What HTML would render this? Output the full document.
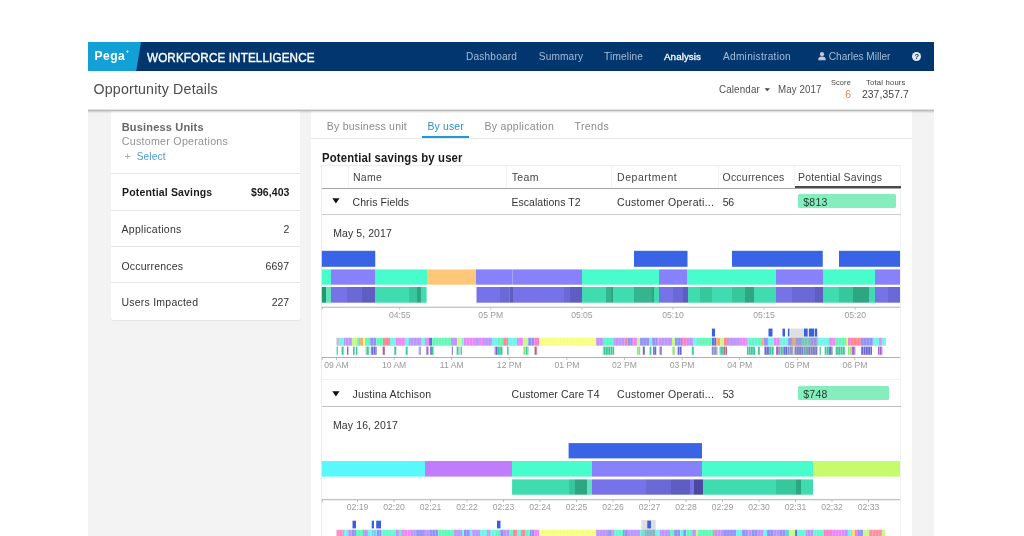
<!DOCTYPE html>
<html lang="en"><head><meta charset="utf-8"><title>Workforce Intelligence - Opportunity Details</title>
<style>
html,body{margin:0;padding:0;background:#fff;}
body{width:1024px;height:536px;position:relative;overflow:hidden;font-family:"Liberation Sans",sans-serif;}
.s{position:absolute;left:0;top:0;width:1024px;height:536px;display:block;margin:0;padding:0;will-change:transform;}
.s>*{position:absolute;display:block;}
.s>span,.s>i{white-space:nowrap;}
</style></head><body>
<div class="s app">
<div style="left:88.00px;top:42.00px;width:846.00px;height:494.00px;background:#f3f3f3;"></div>
</div>
<header class="s topbar">
<div style="left:88.00px;top:41.80px;width:846.00px;height:29.20px;background:#01366f;"></div>
<svg style="left:88px;top:41.8px" width="60" height="29.2"><polygon points="0,0 53,0 48.2,29.2 0,29.2" fill="#12a0d6"/></svg>
<i style="left:125.8px;top:47.6px;font-size:5.5px;line-height:7px;color:#fff;font-weight:bold;font-style:normal">+</i>
<svg style="left:817.5px;top:52.2px" width="8" height="8.4" viewBox="0 0 8 8.4"><circle cx="4" cy="2.2" r="2.1" fill="#c2cad8"/><path d="M0.2 8.2 C0.2 5.4 1.6 4.4 4 4.4 C6.4 4.4 7.8 5.4 7.8 8.2 Z" fill="#c2cad8"/></svg>
<div style="left:912px;top:52px;width:9px;height:9px;border-radius:50%;background:#e6eaf0"></div>
<i style="left:914.4px;top:52.6px;font-size:7.5px;line-height:8px;color:#01366f;font-weight:bold;font-style:normal">?</i>
<span style="left:94.60px;top:50.21px;font-size:12px;line-height:13.40px;color:#fff;letter-spacing:0.439px;font-weight:bold;">Pega</span>
<span style="left:146.50px;top:50.91px;font-size:13px;line-height:14.52px;color:#fff;letter-spacing:0.126px;transform:scaleX(0.9);transform-origin:0 0;-webkit-text-stroke:0.4px #fff;">WORKFORCE INTELLIGENCE</span>
<span style="left:466.00px;top:51.41px;font-size:10.1px;line-height:11.28px;color:#a9bcd6;letter-spacing:0.199px;">Dashboard</span>
<span style="left:538.75px;top:51.41px;font-size:10.1px;line-height:11.28px;color:#a9bcd6;letter-spacing:0.173px;">Summary</span>
<span style="left:604.00px;top:51.41px;font-size:10.1px;line-height:11.28px;color:#a9bcd6;letter-spacing:0.173px;">Timeline</span>
<span style="left:664.00px;top:52.41px;font-size:9.8px;line-height:10.95px;color:#fff;letter-spacing:0.073px;-webkit-text-stroke:0.3px #fff;">Analysis</span>
<span style="left:723.00px;top:51.41px;font-size:10.1px;line-height:11.28px;color:#a9bcd6;letter-spacing:0.289px;">Administration</span>
<span style="left:828.75px;top:51.41px;font-size:10.1px;line-height:11.28px;color:#a9bcd6;letter-spacing:0.001px;">Charles Miller</span>
</header>
<section class="s subheader">
<div style="left:88.00px;top:71.00px;width:846.00px;height:38.00px;background:#fff;"></div>
<div style="left:136.50px;top:70.00px;width:797.50px;height:1.00px;background:#002d62;"></div>
<svg style="left:763.7px;top:88.1px" width="7" height="4"><polygon points="0.5,0.3 6,0.3 3.25,3.3" fill="#444"/></svg>
<span style="left:93.50px;top:81.81px;font-size:14.2px;line-height:15.86px;color:#4c4c4c;letter-spacing:0.194px;">Opportunity Details</span>
<span style="left:718.75px;top:83.20px;font-size:10.8px;line-height:12.06px;color:#505050;letter-spacing:0.136px;transform:scaleX(0.91);transform-origin:0 0;">Calendar</span>
<span style="left:778.00px;top:83.20px;font-size:10.8px;line-height:12.06px;color:#505050;letter-spacing:0.129px;transform:scaleX(0.9);transform-origin:0 0;">May 2017</span>
<span style="left:831.00px;top:78.61px;font-size:7.4px;line-height:8.27px;color:#444;letter-spacing:0.117px;">Score</span>
<span style="left:866.00px;top:78.61px;font-size:7.7px;line-height:8.60px;color:#444;letter-spacing:0.183px;">Total hours</span>
<span style="left:845.30px;top:89.01px;font-size:10.4px;line-height:11.62px;color:#e8865a;">6</span>
<span style="left:861.90px;top:89.01px;font-size:10.4px;line-height:11.62px;color:#444;letter-spacing:0.079px;">237,357.7</span>
</section>
<aside class="s sidebar">
<div style="left:110.60px;top:110.50px;width:189.40px;height:209.50px;background:#fff;box-shadow:0 1px 1px rgba(0,0,0,0.06);border-radius:0 0 2px 2px;"></div>
<div style="left:110.60px;top:173.25px;width:189.40px;height:1.00px;background:#e6e6e6;"></div>
<div style="left:110.60px;top:209.50px;width:189.40px;height:1.00px;background:#e6e6e6;"></div>
<div style="left:110.60px;top:245.80px;width:189.40px;height:1.00px;background:#e6e6e6;"></div>
<div style="left:110.60px;top:282.10px;width:189.40px;height:1.00px;background:#e6e6e6;"></div>
<span style="left:121.75px;top:120.50px;font-size:11px;line-height:12.29px;color:#666;letter-spacing:0.176px;font-weight:bold;">Business Units</span>
<span style="left:121.75px;top:136.00px;font-size:10.7px;line-height:11.95px;color:#939393;letter-spacing:0.253px;">Customer Operations</span>
<span style="left:124.50px;top:150.01px;font-size:11px;line-height:12.29px;color:#aaa;">+</span>
<span style="left:136.75px;top:151.00px;font-size:10.2px;line-height:11.39px;color:#5299d0;letter-spacing:0.080px;">Select</span>
<span style="left:121.50px;top:186.31px;font-size:11.2px;line-height:12.51px;color:#1a1a1a;letter-spacing:0.166px;font-weight:bold;transform:scaleX(0.94);transform-origin:0 0;">Potential Savings</span>
<span style="left:250.50px;top:186.31px;font-size:11.2px;line-height:12.51px;color:#1a1a1a;letter-spacing:0.079px;font-weight:bold;transform:scaleX(0.94);transform-origin:0 0;">$96,403</span>
<span style="left:121.50px;top:224.00px;font-size:10.5px;line-height:11.73px;color:#333;letter-spacing:0.285px;">Applications</span>
<span style="left:283.50px;top:224.00px;font-size:10.5px;line-height:11.73px;color:#333;">2</span>
<span style="left:121.50px;top:260.50px;font-size:10.5px;line-height:11.73px;color:#333;letter-spacing:0.198px;">Occurrences</span>
<span style="left:265.50px;top:260.50px;font-size:10.5px;line-height:11.73px;color:#333;letter-spacing:0.047px;">6697</span>
<span style="left:121.50px;top:297.00px;font-size:10.5px;line-height:11.73px;color:#333;letter-spacing:0.229px;">Users Impacted</span>
<span style="left:271.75px;top:297.00px;font-size:10.5px;line-height:11.73px;color:#333;letter-spacing:-0.134px;">227</span>
</aside>
<main class="s content">
<div style="left:311.00px;top:110.50px;width:601.00px;height:425.50px;background:#fff;"></div>
<div style="left:311.00px;top:138.30px;width:601.00px;height:1.00px;background:#e7e7e7;"></div>
<div style="left:422.00px;top:135.50px;width:46.75px;height:2.80px;background:#1f9ad6;"></div>
<div style="left:321.50px;top:165.00px;width:579.00px;height:1.00px;background:#ececec;"></div>
<div style="left:321.30px;top:165.00px;width:1.00px;height:371.00px;background:#ebebeb;"></div>
<div style="left:899.70px;top:165.00px;width:1.00px;height:371.00px;background:#efefef;"></div>
<div style="left:347.70px;top:166.00px;width:1.00px;height:22.00px;background:#f3f3f3;"></div>
<div style="left:505.70px;top:166.00px;width:1.00px;height:22.00px;background:#f3f3f3;"></div>
<div style="left:611.20px;top:166.00px;width:1.00px;height:22.00px;background:#f3f3f3;"></div>
<div style="left:717.70px;top:166.00px;width:1.00px;height:22.00px;background:#f3f3f3;"></div>
<div style="left:793.70px;top:166.00px;width:1.00px;height:22.00px;background:#f3f3f3;"></div>
<div style="left:321.50px;top:188.20px;width:579.00px;height:1.10px;background:#a6a6a6;"></div>
<div style="left:794.50px;top:186.40px;width:106.00px;height:2.00px;background:#4a4a4a;"></div>
<div style="left:321.50px;top:213.50px;width:579.00px;height:1.00px;background:#cdcdcd;"></div>
<div style="left:321.50px;top:378.80px;width:579.00px;height:1.00px;background:#f2f2f2;"></div>
<div style="left:321.50px;top:405.60px;width:579.00px;height:1.20px;background:#bcbec4;"></div>
<svg style="left:331.5px;top:198.1px" width="8" height="6"><polygon points="0.3,0.3 7.5,0.3 3.9,5.4" fill="#111"/></svg>
<div style="left:798.00px;top:194.30px;width:98.30px;height:13.70px;background:#86edbd;border-radius:1.5px;"></div>
<svg style="left:331.5px;top:390.5px" width="8" height="6"><polygon points="0.3,0.3 7.5,0.3 3.9,5.4" fill="#111"/></svg>
<div style="left:798.00px;top:386.00px;width:90.50px;height:14.40px;background:#86edbd;border-radius:1.5px;"></div>
<svg style="left:311px;top:240px" width="601" height="296" viewBox="0 0 601 296"><rect x="10.80" y="10.80" width="53.45" height="16.00" fill="#3a64e6"/><rect x="323.00" y="10.80" width="53.50" height="16.00" fill="#3a64e6"/><rect x="421.00" y="10.80" width="90.75" height="16.00" fill="#3a64e6"/><rect x="528.00" y="10.80" width="61.00" height="16.00" fill="#3a64e6"/><linearGradient id="g1" gradientUnits="userSpaceOnUse" x1="10.80" y1="0" x2="589.00" y2="0"><stop offset="0.00000" stop-color="#49fccb"/><stop offset="0.01522" stop-color="#49fccb"/><stop offset="0.01522" stop-color="#8781fb"/><stop offset="0.09244" stop-color="#8781fb"/><stop offset="0.09244" stop-color="#49fccb"/><stop offset="0.18125" stop-color="#49fccb"/><stop offset="0.18125" stop-color="#ffc878"/><stop offset="0.26755" stop-color="#ffc878"/><stop offset="0.26755" stop-color="#8781fb"/><stop offset="0.44984" stop-color="#8781fb"/><stop offset="0.44984" stop-color="#49fccb"/><stop offset="0.58362" stop-color="#49fccb"/><stop offset="0.58362" stop-color="#8781fb"/><stop offset="0.63248" stop-color="#8781fb"/><stop offset="0.63248" stop-color="#49fccb"/><stop offset="0.78511" stop-color="#49fccb"/><stop offset="0.78511" stop-color="#8781fb"/><stop offset="0.86640" stop-color="#8781fb"/><stop offset="0.86640" stop-color="#49fccb"/><stop offset="0.95590" stop-color="#49fccb"/><stop offset="0.95590" stop-color="#8781fb"/><stop offset="1.00000" stop-color="#8781fb"/></linearGradient><rect x="10.80" y="29.40" width="578.20" height="15.30" fill="url(#g1)"/><rect x="201.40" y="29.40" width="0.60" height="15.30" fill="#fff" fill-opacity="0.45"/><linearGradient id="g2" gradientUnits="userSpaceOnUse" x1="10.80" y1="0" x2="115.60" y2="0"><stop offset="0.00000" stop-color="#1f9a70"/><stop offset="0.04008" stop-color="#1f9a70"/><stop offset="0.04008" stop-color="#5fe3bb"/><stop offset="0.08397" stop-color="#5fe3bb"/><stop offset="0.08397" stop-color="#7673e8"/><stop offset="0.24046" stop-color="#7673e8"/><stop offset="0.24046" stop-color="#6b69d6"/><stop offset="0.38359" stop-color="#6b69d6"/><stop offset="0.38359" stop-color="#5f5dc2"/><stop offset="0.51002" stop-color="#5f5dc2"/><stop offset="0.51002" stop-color="#3edcae"/><stop offset="0.83206" stop-color="#3edcae"/><stop offset="0.83206" stop-color="#36c79b"/><stop offset="0.90840" stop-color="#36c79b"/><stop offset="0.90840" stop-color="#2ea681"/><stop offset="0.94656" stop-color="#2ea681"/><stop offset="0.94656" stop-color="#3edcae"/><stop offset="1.00000" stop-color="#3edcae"/></linearGradient><rect x="10.80" y="47.00" width="104.80" height="15.70" fill="url(#g2)"/><linearGradient id="g3" gradientUnits="userSpaceOnUse" x1="165.50" y1="0" x2="589.00" y2="0"><stop offset="0.00000" stop-color="#7673e8"/><stop offset="0.05549" stop-color="#7673e8"/><stop offset="0.05549" stop-color="#6b69d6"/><stop offset="0.07674" stop-color="#6b69d6"/><stop offset="0.07674" stop-color="#7673e8"/><stop offset="0.07910" stop-color="#7673e8"/><stop offset="0.07910" stop-color="#5f5dc2"/><stop offset="0.08501" stop-color="#5f5dc2"/><stop offset="0.08501" stop-color="#7673e8"/><stop offset="0.20661" stop-color="#7673e8"/><stop offset="0.20661" stop-color="#6b69d6"/><stop offset="0.22078" stop-color="#6b69d6"/><stop offset="0.22078" stop-color="#5f5dc2"/><stop offset="0.24888" stop-color="#5f5dc2"/><stop offset="0.24888" stop-color="#3edcae"/><stop offset="0.30579" stop-color="#3edcae"/><stop offset="0.30579" stop-color="#34b58d"/><stop offset="0.31877" stop-color="#34b58d"/><stop offset="0.31877" stop-color="#2ea681"/><stop offset="0.32231" stop-color="#2ea681"/><stop offset="0.32231" stop-color="#3edcae"/><stop offset="0.37190" stop-color="#3edcae"/><stop offset="0.37190" stop-color="#34b58d"/><stop offset="0.41558" stop-color="#34b58d"/><stop offset="0.41558" stop-color="#2ea681"/><stop offset="0.41913" stop-color="#2ea681"/><stop offset="0.41913" stop-color="#3edcae"/><stop offset="0.43152" stop-color="#3edcae"/><stop offset="0.43152" stop-color="#7673e8"/><stop offset="0.46399" stop-color="#7673e8"/><stop offset="0.46399" stop-color="#6b69d6"/><stop offset="0.48760" stop-color="#6b69d6"/><stop offset="0.48760" stop-color="#5f5dc2"/><stop offset="0.49823" stop-color="#5f5dc2"/><stop offset="0.49823" stop-color="#3edcae"/><stop offset="0.52774" stop-color="#3edcae"/><stop offset="0.52774" stop-color="#36c79b"/><stop offset="0.55608" stop-color="#36c79b"/><stop offset="0.55608" stop-color="#3edcae"/><stop offset="0.60331" stop-color="#3edcae"/><stop offset="0.60331" stop-color="#36c79b"/><stop offset="0.63400" stop-color="#36c79b"/><stop offset="0.63400" stop-color="#2ea681"/><stop offset="0.65525" stop-color="#2ea681"/><stop offset="0.65525" stop-color="#3edcae"/><stop offset="0.70661" stop-color="#3edcae"/><stop offset="0.70661" stop-color="#7673e8"/><stop offset="0.74498" stop-color="#7673e8"/><stop offset="0.74498" stop-color="#6b69d6"/><stop offset="0.79929" stop-color="#6b69d6"/><stop offset="0.79929" stop-color="#5f5dc2"/><stop offset="0.81759" stop-color="#5f5dc2"/><stop offset="0.81759" stop-color="#3edcae"/><stop offset="0.85596" stop-color="#3edcae"/><stop offset="0.85596" stop-color="#36c79b"/><stop offset="0.88902" stop-color="#36c79b"/><stop offset="0.88902" stop-color="#2ea681"/><stop offset="0.92680" stop-color="#2ea681"/><stop offset="0.92680" stop-color="#3edcae"/><stop offset="0.93979" stop-color="#3edcae"/><stop offset="0.93979" stop-color="#7673e8"/><stop offset="0.97166" stop-color="#7673e8"/><stop offset="0.97166" stop-color="#6b69d6"/><stop offset="1.00000" stop-color="#6b69d6"/></linearGradient><rect x="165.50" y="47.00" width="423.50" height="15.70" fill="url(#g3)"/><rect x="10.80" y="66.70" width="578.20" height="1.00" fill="#b0b0b0"/><rect x="10.80" y="67.00" width="0.80" height="2.50" fill="#b0b0b0"/><rect x="88.30" y="67.50" width="0.80" height="2.00" fill="#b0b0b0"/><rect x="179.40" y="67.50" width="0.80" height="2.00" fill="#b0b0b0"/><rect x="270.50" y="67.50" width="0.80" height="2.00" fill="#b0b0b0"/><rect x="361.60" y="67.50" width="0.80" height="2.00" fill="#b0b0b0"/><rect x="452.70" y="67.50" width="0.80" height="2.00" fill="#b0b0b0"/><rect x="543.80" y="67.50" width="0.80" height="2.00" fill="#b0b0b0"/><linearGradient id="g4" gradientUnits="userSpaceOnUse" x1="25.40" y1="0" x2="575.00" y2="0"><stop offset="0.00000" stop-color="#b8b8c8"/><stop offset="0.00528" stop-color="#b8b8c8"/><stop offset="0.00528" stop-color="#5ef2e6"/><stop offset="0.01328" stop-color="#5ef2e6"/><stop offset="0.01328" stop-color="#b487fc"/><stop offset="0.02929" stop-color="#b487fc"/><stop offset="0.02929" stop-color="#c0f878"/><stop offset="0.03730" stop-color="#c0f878"/><stop offset="0.03730" stop-color="#50f5b0"/><stop offset="0.04112" stop-color="#50f5b0"/><stop offset="0.04112" stop-color="#f4a05c"/><stop offset="0.04785" stop-color="#f4a05c"/><stop offset="0.04785" stop-color="#f5ff70"/><stop offset="0.05204" stop-color="#f5ff70"/><stop offset="0.05204" stop-color="#50f5b0"/><stop offset="0.06114" stop-color="#50f5b0"/><stop offset="0.06114" stop-color="#8484f4"/><stop offset="0.07205" stop-color="#8484f4"/><stop offset="0.07205" stop-color="#50f5b0"/><stop offset="0.08388" stop-color="#50f5b0"/><stop offset="0.08388" stop-color="#ff7488"/><stop offset="0.09716" stop-color="#ff7488"/><stop offset="0.09716" stop-color="#5ef2e6"/><stop offset="0.10917" stop-color="#5ef2e6"/><stop offset="0.10917" stop-color="#e878f4"/><stop offset="0.12391" stop-color="#e878f4"/><stop offset="0.12391" stop-color="#5ef2e6"/><stop offset="0.13191" stop-color="#5ef2e6"/><stop offset="0.13191" stop-color="#b487fc"/><stop offset="0.15320" stop-color="#b487fc"/><stop offset="0.15320" stop-color="#5ef2e6"/><stop offset="0.16121" stop-color="#5ef2e6"/><stop offset="0.16121" stop-color="#e878f4"/><stop offset="0.16921" stop-color="#e878f4"/><stop offset="0.16921" stop-color="#4a5fd8"/><stop offset="0.17449" stop-color="#4a5fd8"/><stop offset="0.17449" stop-color="#50f5b0"/><stop offset="0.20924" stop-color="#50f5b0"/><stop offset="0.20924" stop-color="#b487fc"/><stop offset="0.21980" stop-color="#b487fc"/><stop offset="0.21980" stop-color="#c0f878"/><stop offset="0.22908" stop-color="#c0f878"/><stop offset="0.22908" stop-color="#5ef2e6"/><stop offset="0.23217" stop-color="#5ef2e6"/><stop offset="0.23217" stop-color="#e878f4"/><stop offset="0.25218" stop-color="#e878f4"/><stop offset="0.25218" stop-color="#b487fc"/><stop offset="0.26001" stop-color="#b487fc"/><stop offset="0.26001" stop-color="#e878f4"/><stop offset="0.26674" stop-color="#e878f4"/><stop offset="0.26674" stop-color="#b487fc"/><stop offset="0.28402" stop-color="#b487fc"/><stop offset="0.28402" stop-color="#5ef2e6"/><stop offset="0.29221" stop-color="#5ef2e6"/><stop offset="0.29221" stop-color="#50f5b0"/><stop offset="0.30258" stop-color="#50f5b0"/><stop offset="0.30258" stop-color="#ff7488"/><stop offset="0.31205" stop-color="#ff7488"/><stop offset="0.31205" stop-color="#5ef2e6"/><stop offset="0.32933" stop-color="#5ef2e6"/><stop offset="0.32933" stop-color="#e878f4"/><stop offset="0.34007" stop-color="#e878f4"/><stop offset="0.34007" stop-color="#c0f878"/><stop offset="0.34789" stop-color="#c0f878"/><stop offset="0.34789" stop-color="#8484f4"/><stop offset="0.35990" stop-color="#8484f4"/><stop offset="0.35990" stop-color="#f66fc0"/><stop offset="0.36936" stop-color="#f66fc0"/><stop offset="0.36936" stop-color="#f5ff70"/><stop offset="0.47234" stop-color="#f5ff70"/><stop offset="0.47234" stop-color="#b487fc"/><stop offset="0.48472" stop-color="#b487fc"/><stop offset="0.48472" stop-color="#40f8c0"/><stop offset="0.50546" stop-color="#40f8c0"/><stop offset="0.50546" stop-color="#b487fc"/><stop offset="0.52547" stop-color="#b487fc"/><stop offset="0.52547" stop-color="#ff7488"/><stop offset="0.53057" stop-color="#ff7488"/><stop offset="0.53057" stop-color="#8484f4"/><stop offset="0.53748" stop-color="#8484f4"/><stop offset="0.53748" stop-color="#e878f4"/><stop offset="0.54676" stop-color="#e878f4"/><stop offset="0.54676" stop-color="#c0f878"/><stop offset="0.55204" stop-color="#c0f878"/><stop offset="0.55204" stop-color="#8484f4"/><stop offset="0.56932" stop-color="#8484f4"/><stop offset="0.56932" stop-color="#5ef2e6"/><stop offset="0.57478" stop-color="#5ef2e6"/><stop offset="0.57478" stop-color="#8484f4"/><stop offset="0.58279" stop-color="#8484f4"/><stop offset="0.58279" stop-color="#e878f4"/><stop offset="0.58934" stop-color="#e878f4"/><stop offset="0.58934" stop-color="#b487fc"/><stop offset="0.61063" stop-color="#b487fc"/><stop offset="0.61063" stop-color="#c0f878"/><stop offset="0.61608" stop-color="#c0f878"/><stop offset="0.61608" stop-color="#8484f4"/><stop offset="0.62937" stop-color="#8484f4"/><stop offset="0.62937" stop-color="#f66fc0"/><stop offset="0.64010" stop-color="#f66fc0"/><stop offset="0.64010" stop-color="#b487fc"/><stop offset="0.64793" stop-color="#b487fc"/><stop offset="0.64793" stop-color="#5ef2e6"/><stop offset="0.65611" stop-color="#5ef2e6"/><stop offset="0.65611" stop-color="#50f5b0"/><stop offset="0.68268" stop-color="#50f5b0"/><stop offset="0.68268" stop-color="#4a5fd8"/><stop offset="0.69068" stop-color="#4a5fd8"/><stop offset="0.69068" stop-color="#f4a05c"/><stop offset="0.69723" stop-color="#f4a05c"/><stop offset="0.69723" stop-color="#c0f878"/><stop offset="0.70524" stop-color="#c0f878"/><stop offset="0.70524" stop-color="#ff7488"/><stop offset="0.71197" stop-color="#ff7488"/><stop offset="0.71197" stop-color="#b487fc"/><stop offset="0.73472" stop-color="#b487fc"/><stop offset="0.73472" stop-color="#e878f4"/><stop offset="0.74654" stop-color="#e878f4"/><stop offset="0.74654" stop-color="#48f6c4"/><stop offset="0.77220" stop-color="#48f6c4"/><stop offset="0.77220" stop-color="#f4a05c"/><stop offset="0.77747" stop-color="#f4a05c"/><stop offset="0.77747" stop-color="#8484f4"/><stop offset="0.78530" stop-color="#8484f4"/><stop offset="0.78530" stop-color="#5ef2e6"/><stop offset="0.79622" stop-color="#5ef2e6"/><stop offset="0.79622" stop-color="#e878f4"/><stop offset="0.80677" stop-color="#e878f4"/><stop offset="0.80677" stop-color="#5ef2e6"/><stop offset="0.82151" stop-color="#5ef2e6"/><stop offset="0.82151" stop-color="#8484f4"/><stop offset="0.82951" stop-color="#8484f4"/><stop offset="0.82951" stop-color="#f4a05c"/><stop offset="0.83624" stop-color="#f4a05c"/><stop offset="0.83624" stop-color="#8484f4"/><stop offset="0.84807" stop-color="#8484f4"/><stop offset="0.84807" stop-color="#48d8c0"/><stop offset="0.86135" stop-color="#48d8c0"/><stop offset="0.86135" stop-color="#8484f4"/><stop offset="0.87482" stop-color="#8484f4"/><stop offset="0.87482" stop-color="#5ef2e6"/><stop offset="0.89611" stop-color="#5ef2e6"/><stop offset="0.89611" stop-color="#e878f4"/><stop offset="0.90811" stop-color="#e878f4"/><stop offset="0.90811" stop-color="#50f5b0"/><stop offset="0.92667" stop-color="#50f5b0"/><stop offset="0.92667" stop-color="#c0f878"/><stop offset="0.93086" stop-color="#c0f878"/><stop offset="0.93086" stop-color="#f66fc0"/><stop offset="0.93614" stop-color="#f66fc0"/><stop offset="0.93614" stop-color="#ff7488"/><stop offset="0.95451" stop-color="#ff7488"/><stop offset="0.95451" stop-color="#8484f4"/><stop offset="0.97598" stop-color="#8484f4"/><stop offset="0.97598" stop-color="#5ef2e6"/><stop offset="0.98672" stop-color="#5ef2e6"/><stop offset="0.98672" stop-color="#e878f4"/><stop offset="0.99327" stop-color="#e878f4"/><stop offset="0.99327" stop-color="#5ef2e6"/><stop offset="1.00000" stop-color="#5ef2e6"/></linearGradient><rect x="25.40" y="97.80" width="549.60" height="7.80" fill="url(#g4)"/><rect x="25.40" y="106.60" width="1.40" height="8.20" fill="#3cc898"/><rect x="30.50" y="106.60" width="2.50" height="8.20" fill="#3cc898"/><rect x="36.00" y="106.60" width="1.50" height="8.20" fill="#6868d8"/><rect x="42.00" y="106.60" width="1.70" height="8.20" fill="#3cc898"/><rect x="45.00" y="106.60" width="1.60" height="8.20" fill="#3cc898"/><rect x="54.70" y="106.60" width="3.60" height="8.20" fill="#3cc898"/><rect x="59.80" y="106.60" width="5.80" height="8.20" fill="#6868d8"/><rect x="71.50" y="106.60" width="2.50" height="8.20" fill="#b06888"/><rect x="83.00" y="106.60" width="2.40" height="8.20" fill="#3cc898"/><rect x="94.60" y="106.60" width="2.10" height="8.20" fill="#3cc898"/><rect x="107.80" y="106.60" width="1.80" height="8.20" fill="#6868d8"/><rect x="115.00" y="106.60" width="2.60" height="8.20" fill="#a060c8"/><linearGradient id="g5" gradientUnits="userSpaceOnUse" x1="119.00" y1="0" x2="122.80" y2="0"><stop offset="0.00000" stop-color="#6868d8"/><stop offset="0.52632" stop-color="#6868d8"/><stop offset="0.52632" stop-color="#3cc898"/><stop offset="1.00000" stop-color="#3cc898"/></linearGradient><rect x="119.00" y="106.60" width="3.80" height="8.20" fill="url(#g5)"/><rect x="140.80" y="106.60" width="1.00" height="8.20" fill="#6868d8"/><rect x="145.50" y="106.60" width="2.90" height="8.20" fill="#3cc898"/><rect x="149.40" y="106.60" width="1.60" height="8.20" fill="#3cc898"/><linearGradient id="g6" gradientUnits="userSpaceOnUse" x1="183.70" y1="0" x2="191.70" y2="0"><stop offset="0.00000" stop-color="#6868d8"/><stop offset="0.41250" stop-color="#6868d8"/><stop offset="0.41250" stop-color="#3cc898"/><stop offset="1.00000" stop-color="#3cc898"/></linearGradient><rect x="183.70" y="106.60" width="8.00" height="8.20" fill="url(#g6)"/><rect x="196.00" y="106.60" width="1.60" height="8.20" fill="#3cc898"/><linearGradient id="g7" gradientUnits="userSpaceOnUse" x1="212.30" y1="0" x2="217.40" y2="0"><stop offset="0.00000" stop-color="#98e078"/><stop offset="0.52941" stop-color="#98e078"/><stop offset="0.52941" stop-color="#3cc898"/><stop offset="1.00000" stop-color="#3cc898"/></linearGradient><rect x="212.30" y="106.60" width="5.10" height="8.20" fill="url(#g7)"/><rect x="223.20" y="106.60" width="3.00" height="8.20" fill="#b06888"/><rect x="291.80" y="106.60" width="11.40" height="8.20" fill="#3cc898"/><rect x="325.90" y="106.60" width="3.40" height="8.20" fill="#98e078"/><rect x="331.70" y="106.60" width="2.30" height="8.20" fill="#6868d8"/><rect x="338.30" y="106.60" width="2.20" height="8.20" fill="#3cc898"/><rect x="342.00" y="106.60" width="3.40" height="8.20" fill="#6868d8"/><rect x="348.60" y="106.60" width="2.20" height="8.20" fill="#6868d8"/><rect x="361.00" y="106.60" width="3.00" height="8.20" fill="#98e078"/><rect x="366.50" y="106.60" width="4.40" height="8.20" fill="#6868d8"/><rect x="380.80" y="106.60" width="2.20" height="8.20" fill="#3cc898"/><rect x="400.60" y="106.60" width="5.80" height="8.20" fill="#8890c8"/><linearGradient id="g8" gradientUnits="userSpaceOnUse" x1="408.60" y1="0" x2="416.00" y2="0"><stop offset="0.00000" stop-color="#3cc898"/><stop offset="0.59459" stop-color="#3cc898"/><stop offset="0.59459" stop-color="#b06888"/><stop offset="1.00000" stop-color="#b06888"/></linearGradient><rect x="408.60" y="106.60" width="7.40" height="8.20" fill="url(#g8)"/><rect x="435.90" y="106.60" width="8.10" height="8.20" fill="#3cc898"/><rect x="446.80" y="106.60" width="2.20" height="8.20" fill="#3cc898"/><linearGradient id="g9" gradientUnits="userSpaceOnUse" x1="453.00" y1="0" x2="463.00" y2="0"><stop offset="0.00000" stop-color="#6868d8"/><stop offset="0.50000" stop-color="#6868d8"/><stop offset="0.50000" stop-color="#3cc898"/><stop offset="1.00000" stop-color="#3cc898"/></linearGradient><rect x="453.00" y="106.60" width="10.00" height="8.20" fill="url(#g9)"/><linearGradient id="g10" gradientUnits="userSpaceOnUse" x1="465.00" y1="0" x2="482.00" y2="0"><stop offset="0.00000" stop-color="#a060c8"/><stop offset="0.17647" stop-color="#a060c8"/><stop offset="0.17647" stop-color="#3cc898"/><stop offset="0.47059" stop-color="#3cc898"/><stop offset="0.47059" stop-color="#6868d8"/><stop offset="0.70588" stop-color="#6868d8"/><stop offset="0.70588" stop-color="#8090c8"/><stop offset="1.00000" stop-color="#8090c8"/></linearGradient><rect x="465.00" y="106.60" width="17.00" height="8.20" fill="url(#g10)"/><linearGradient id="g11" gradientUnits="userSpaceOnUse" x1="483.50" y1="0" x2="506.20" y2="0"><stop offset="0.00000" stop-color="#6868d8"/><stop offset="0.37445" stop-color="#6868d8"/><stop offset="0.37445" stop-color="#50a8c0"/><stop offset="0.59471" stop-color="#50a8c0"/><stop offset="0.59471" stop-color="#6868d8"/><stop offset="1.00000" stop-color="#6868d8"/></linearGradient><rect x="483.50" y="106.60" width="22.70" height="8.20" fill="url(#g11)"/><rect x="508.40" y="106.60" width="1.40" height="8.20" fill="#3cc898"/><linearGradient id="g12" gradientUnits="userSpaceOnUse" x1="513.50" y1="0" x2="521.50" y2="0"><stop offset="0.00000" stop-color="#3cc898"/><stop offset="0.56250" stop-color="#3cc898"/><stop offset="0.56250" stop-color="#6868d8"/><stop offset="1.00000" stop-color="#6868d8"/></linearGradient><rect x="513.50" y="106.60" width="8.00" height="8.20" fill="url(#g12)"/><rect x="524.50" y="106.60" width="9.50" height="8.20" fill="#3cc898"/><linearGradient id="g13" gradientUnits="userSpaceOnUse" x1="537.00" y1="0" x2="544.30" y2="0"><stop offset="0.00000" stop-color="#98e078"/><stop offset="0.49315" stop-color="#98e078"/><stop offset="0.49315" stop-color="#a060c8"/><stop offset="1.00000" stop-color="#a060c8"/></linearGradient><rect x="537.00" y="106.60" width="7.30" height="8.20" fill="url(#g13)"/><rect x="550.00" y="106.60" width="11.00" height="8.20" fill="#6868d8"/><rect x="567.00" y="106.60" width="4.30" height="8.20" fill="#a060c8"/><pattern id="st1" width="2.3" height="8" patternUnits="userSpaceOnUse"><rect x="0" y="0" width="0.7" height="8" fill="#fff"/></pattern><pattern id="st2" width="3.1" height="8" patternUnits="userSpaceOnUse"><rect x="0" y="0" width="0.8" height="8" fill="#fff"/></pattern><rect x="25.00" y="106.40" width="550.20" height="8.60" fill="url(#st1)" fill-opacity="0.5"/><rect x="25.00" y="97.60" width="550.20" height="8.20" fill="url(#st2)" fill-opacity="0.22"/><rect x="25.40" y="97.80" width="549.60" height="7.80" fill="#fff" fill-opacity="0.12"/><rect x="400.90" y="88.60" width="3.10" height="7.90" fill="#3a5fe0"/><rect x="457.50" y="88.60" width="4.00" height="7.90" fill="#3a5fe0"/><rect x="471.50" y="88.60" width="2.50" height="7.90" fill="#3a5fe0"/><rect x="476.90" y="88.60" width="1.60" height="7.90" fill="#3a5fe0"/><rect x="479.30" y="88.60" width="27.70" height="26.40" fill="#a0a0a8" fill-opacity="0.34"/><rect x="493.00" y="88.60" width="3.60" height="7.90" fill="#3a5fe0"/><rect x="498.00" y="88.60" width="5.20" height="7.90" fill="#3a5fe0"/><rect x="504.00" y="88.60" width="2.00" height="7.90" fill="#3a5fe0"/><rect x="10.80" y="117.00" width="578.20" height="1.00" fill="#b0b0b0"/><rect x="10.80" y="117.00" width="0.80" height="3.00" fill="#b0b0b0"/><rect x="25.10" y="118.00" width="0.80" height="2.00" fill="#b0b0b0"/><rect x="82.70" y="118.00" width="0.80" height="2.00" fill="#b0b0b0"/><rect x="140.30" y="118.00" width="0.80" height="2.00" fill="#b0b0b0"/><rect x="197.90" y="118.00" width="0.80" height="2.00" fill="#b0b0b0"/><rect x="255.50" y="118.00" width="0.80" height="2.00" fill="#b0b0b0"/><rect x="313.10" y="118.00" width="0.80" height="2.00" fill="#b0b0b0"/><rect x="370.70" y="118.00" width="0.80" height="2.00" fill="#b0b0b0"/><rect x="428.30" y="118.00" width="0.80" height="2.00" fill="#b0b0b0"/><rect x="485.90" y="118.00" width="0.80" height="2.00" fill="#b0b0b0"/><rect x="543.50" y="118.00" width="0.80" height="2.00" fill="#b0b0b0"/><rect x="257.60" y="203.10" width="133.40" height="15.30" fill="#3a64e6"/><linearGradient id="g14" gradientUnits="userSpaceOnUse" x1="10.80" y1="0" x2="589.00" y2="0"><stop offset="0.00000" stop-color="#58f8fc"/><stop offset="0.17848" stop-color="#58f8fc"/><stop offset="0.17848" stop-color="#c07cfc"/><stop offset="0.32912" stop-color="#c07cfc"/><stop offset="0.32912" stop-color="#49fccb"/><stop offset="0.46731" stop-color="#49fccb"/><stop offset="0.46731" stop-color="#8781fb"/><stop offset="0.65842" stop-color="#8781fb"/><stop offset="0.65842" stop-color="#49fccb"/><stop offset="0.84953" stop-color="#49fccb"/><stop offset="0.84953" stop-color="#c6fc6c"/><stop offset="1.00000" stop-color="#c6fc6c"/></linearGradient><rect x="10.80" y="221.00" width="578.20" height="15.60" fill="url(#g14)"/><linearGradient id="g15" gradientUnits="userSpaceOnUse" x1="201.10" y1="0" x2="502.00" y2="0"><stop offset="0.00000" stop-color="#3edcae"/><stop offset="0.18777" stop-color="#3edcae"/><stop offset="0.18777" stop-color="#36c79b"/><stop offset="0.20904" stop-color="#36c79b"/><stop offset="0.20904" stop-color="#2ea681"/><stop offset="0.24892" stop-color="#2ea681"/><stop offset="0.24892" stop-color="#5fe3bb"/><stop offset="0.26554" stop-color="#5fe3bb"/><stop offset="0.26554" stop-color="#7673e8"/><stop offset="0.44500" stop-color="#7673e8"/><stop offset="0.44500" stop-color="#6b69d6"/><stop offset="0.52808" stop-color="#6b69d6"/><stop offset="0.52808" stop-color="#5f5dc2"/><stop offset="0.59123" stop-color="#5f5dc2"/><stop offset="0.59123" stop-color="#7673e8"/><stop offset="0.60452" stop-color="#7673e8"/><stop offset="0.60452" stop-color="#4a489f"/><stop offset="0.63277" stop-color="#4a489f"/><stop offset="0.63277" stop-color="#3edcae"/><stop offset="0.87704" stop-color="#3edcae"/><stop offset="0.87704" stop-color="#36c79b"/><stop offset="0.94350" stop-color="#36c79b"/><stop offset="0.94350" stop-color="#2ea681"/><stop offset="0.96012" stop-color="#2ea681"/><stop offset="0.96012" stop-color="#3edcae"/><stop offset="1.00000" stop-color="#3edcae"/></linearGradient><rect x="201.10" y="239.40" width="300.90" height="15.30" fill="url(#g15)"/><rect x="10.80" y="259.20" width="578.20" height="1.00" fill="#b0b0b0"/><rect x="10.80" y="259.50" width="0.80" height="3.00" fill="#b0b0b0"/><rect x="46.10" y="260.00" width="0.80" height="2.00" fill="#b0b0b0"/><rect x="82.60" y="260.00" width="0.80" height="2.00" fill="#b0b0b0"/><rect x="119.10" y="260.00" width="0.80" height="2.00" fill="#b0b0b0"/><rect x="155.60" y="260.00" width="0.80" height="2.00" fill="#b0b0b0"/><rect x="192.10" y="260.00" width="0.80" height="2.00" fill="#b0b0b0"/><rect x="228.60" y="260.00" width="0.80" height="2.00" fill="#b0b0b0"/><rect x="265.10" y="260.00" width="0.80" height="2.00" fill="#b0b0b0"/><rect x="301.60" y="260.00" width="0.80" height="2.00" fill="#b0b0b0"/><rect x="338.10" y="260.00" width="0.80" height="2.00" fill="#b0b0b0"/><rect x="374.60" y="260.00" width="0.80" height="2.00" fill="#b0b0b0"/><rect x="411.10" y="260.00" width="0.80" height="2.00" fill="#b0b0b0"/><rect x="447.60" y="260.00" width="0.80" height="2.00" fill="#b0b0b0"/><rect x="484.10" y="260.00" width="0.80" height="2.00" fill="#b0b0b0"/><rect x="520.60" y="260.00" width="0.80" height="2.00" fill="#b0b0b0"/><rect x="557.10" y="260.00" width="0.80" height="2.00" fill="#b0b0b0"/><rect x="41.50" y="280.70" width="3.50" height="7.70" fill="#3a5fe0"/><rect x="60.70" y="280.70" width="2.30" height="7.70" fill="#3a5fe0"/><rect x="65.20" y="280.70" width="4.80" height="7.70" fill="#3a5fe0"/><rect x="186.00" y="280.70" width="3.50" height="7.70" fill="#3a5fe0"/><linearGradient id="g16" gradientUnits="userSpaceOnUse" x1="25.40" y1="0" x2="574.30" y2="0"><stop offset="0.00000" stop-color="#ff80c0"/><stop offset="0.01457" stop-color="#ff80c0"/><stop offset="0.01457" stop-color="#5ef2e6"/><stop offset="0.02113" stop-color="#5ef2e6"/><stop offset="0.02113" stop-color="#b487fc"/><stop offset="0.02933" stop-color="#b487fc"/><stop offset="0.02933" stop-color="#8484f4"/><stop offset="0.03571" stop-color="#8484f4"/><stop offset="0.03571" stop-color="#50f5b0"/><stop offset="0.04937" stop-color="#50f5b0"/><stop offset="0.04937" stop-color="#b487fc"/><stop offset="0.05739" stop-color="#b487fc"/><stop offset="0.05739" stop-color="#5ef2e6"/><stop offset="0.06540" stop-color="#5ef2e6"/><stop offset="0.06540" stop-color="#68c8f0"/><stop offset="0.07342" stop-color="#68c8f0"/><stop offset="0.07342" stop-color="#8484f4"/><stop offset="0.08125" stop-color="#8484f4"/><stop offset="0.08125" stop-color="#50f8c8"/><stop offset="0.10803" stop-color="#50f8c8"/><stop offset="0.10803" stop-color="#b487fc"/><stop offset="0.11314" stop-color="#b487fc"/><stop offset="0.11314" stop-color="#50f5b0"/><stop offset="0.11860" stop-color="#50f5b0"/><stop offset="0.11860" stop-color="#e878f4"/><stop offset="0.13591" stop-color="#e878f4"/><stop offset="0.13591" stop-color="#b487fc"/><stop offset="0.14265" stop-color="#b487fc"/><stop offset="0.14265" stop-color="#f4a05c"/><stop offset="0.14538" stop-color="#f4a05c"/><stop offset="0.14538" stop-color="#8484f4"/><stop offset="0.15959" stop-color="#8484f4"/><stop offset="0.15959" stop-color="#b487fc"/><stop offset="0.17052" stop-color="#b487fc"/><stop offset="0.17052" stop-color="#8484f4"/><stop offset="0.18546" stop-color="#8484f4"/><stop offset="0.18546" stop-color="#50f5b0"/><stop offset="0.21479" stop-color="#50f5b0"/><stop offset="0.21479" stop-color="#b487fc"/><stop offset="0.22809" stop-color="#b487fc"/><stop offset="0.22809" stop-color="#5ef2e6"/><stop offset="0.23246" stop-color="#5ef2e6"/><stop offset="0.23246" stop-color="#8484f4"/><stop offset="0.24303" stop-color="#8484f4"/><stop offset="0.24303" stop-color="#5ef2e6"/><stop offset="0.24795" stop-color="#5ef2e6"/><stop offset="0.24795" stop-color="#b487fc"/><stop offset="0.26161" stop-color="#b487fc"/><stop offset="0.26161" stop-color="#5ef2e6"/><stop offset="0.27364" stop-color="#5ef2e6"/><stop offset="0.27364" stop-color="#e878f4"/><stop offset="0.28038" stop-color="#e878f4"/><stop offset="0.28038" stop-color="#5ef2e6"/><stop offset="0.29113" stop-color="#5ef2e6"/><stop offset="0.29113" stop-color="#50f5b0"/><stop offset="0.29805" stop-color="#50f5b0"/><stop offset="0.29805" stop-color="#8484f4"/><stop offset="0.30443" stop-color="#8484f4"/><stop offset="0.30443" stop-color="#b487fc"/><stop offset="0.31372" stop-color="#b487fc"/><stop offset="0.31372" stop-color="#50f5b0"/><stop offset="0.32173" stop-color="#50f5b0"/><stop offset="0.32173" stop-color="#ff7488"/><stop offset="0.32975" stop-color="#ff7488"/><stop offset="0.32975" stop-color="#5ef2e6"/><stop offset="0.33631" stop-color="#5ef2e6"/><stop offset="0.33631" stop-color="#ff7488"/><stop offset="0.34433" stop-color="#ff7488"/><stop offset="0.34433" stop-color="#50f5b0"/><stop offset="0.35234" stop-color="#50f5b0"/><stop offset="0.35234" stop-color="#8484f4"/><stop offset="0.36036" stop-color="#8484f4"/><stop offset="0.36036" stop-color="#e878f4"/><stop offset="0.36983" stop-color="#e878f4"/><stop offset="0.36983" stop-color="#f5ff70"/><stop offset="0.47295" stop-color="#f5ff70"/><stop offset="0.47295" stop-color="#b487fc"/><stop offset="0.49535" stop-color="#b487fc"/><stop offset="0.49535" stop-color="#8484f4"/><stop offset="0.50027" stop-color="#8484f4"/><stop offset="0.50027" stop-color="#e878f4"/><stop offset="0.50610" stop-color="#e878f4"/><stop offset="0.50610" stop-color="#50f8c8"/><stop offset="0.52214" stop-color="#50f8c8"/><stop offset="0.52214" stop-color="#8484f4"/><stop offset="0.53124" stop-color="#8484f4"/><stop offset="0.53124" stop-color="#b487fc"/><stop offset="0.55274" stop-color="#b487fc"/><stop offset="0.55274" stop-color="#5ef2e6"/><stop offset="0.56222" stop-color="#5ef2e6"/><stop offset="0.56222" stop-color="#70b8c8"/><stop offset="0.58080" stop-color="#70b8c8"/><stop offset="0.58080" stop-color="#5ef2e6"/><stop offset="0.58881" stop-color="#5ef2e6"/><stop offset="0.58881" stop-color="#b487fc"/><stop offset="0.60740" stop-color="#b487fc"/><stop offset="0.60740" stop-color="#50f5b0"/><stop offset="0.61541" stop-color="#50f5b0"/><stop offset="0.61541" stop-color="#8484f4"/><stop offset="0.62598" stop-color="#8484f4"/><stop offset="0.62598" stop-color="#5ef2e6"/><stop offset="0.63144" stop-color="#5ef2e6"/><stop offset="0.63144" stop-color="#8484f4"/><stop offset="0.63691" stop-color="#8484f4"/><stop offset="0.63691" stop-color="#50f5b0"/><stop offset="0.64748" stop-color="#50f5b0"/><stop offset="0.64748" stop-color="#b487fc"/><stop offset="0.65549" stop-color="#b487fc"/><stop offset="0.65549" stop-color="#c0f878"/><stop offset="0.65950" stop-color="#c0f878"/><stop offset="0.65950" stop-color="#50f5b0"/><stop offset="0.68610" stop-color="#50f5b0"/><stop offset="0.68610" stop-color="#ff7488"/><stop offset="0.69156" stop-color="#ff7488"/><stop offset="0.69156" stop-color="#b487fc"/><stop offset="0.70359" stop-color="#b487fc"/><stop offset="0.70359" stop-color="#8484f4"/><stop offset="0.72764" stop-color="#8484f4"/><stop offset="0.72764" stop-color="#5ef2e6"/><stop offset="0.73820" stop-color="#5ef2e6"/><stop offset="0.73820" stop-color="#8484f4"/><stop offset="0.74786" stop-color="#8484f4"/><stop offset="0.74786" stop-color="#b487fc"/><stop offset="0.75715" stop-color="#b487fc"/><stop offset="0.75715" stop-color="#8484f4"/><stop offset="0.76626" stop-color="#8484f4"/><stop offset="0.76626" stop-color="#b487fc"/><stop offset="0.77719" stop-color="#b487fc"/><stop offset="0.77719" stop-color="#5ef2e6"/><stop offset="0.78521" stop-color="#5ef2e6"/><stop offset="0.78521" stop-color="#8484f4"/><stop offset="0.79577" stop-color="#8484f4"/><stop offset="0.79577" stop-color="#b487fc"/><stop offset="0.80634" stop-color="#b487fc"/><stop offset="0.80634" stop-color="#8484f4"/><stop offset="0.81727" stop-color="#8484f4"/><stop offset="0.81727" stop-color="#50c8d0"/><stop offset="0.82510" stop-color="#50c8d0"/><stop offset="0.82510" stop-color="#c0f878"/><stop offset="0.83458" stop-color="#c0f878"/><stop offset="0.83458" stop-color="#4a5fd8"/><stop offset="0.83986" stop-color="#4a5fd8"/><stop offset="0.83986" stop-color="#50f8c8"/><stop offset="0.85462" stop-color="#50f8c8"/><stop offset="0.85462" stop-color="#b487fc"/><stop offset="0.86792" stop-color="#b487fc"/><stop offset="0.86792" stop-color="#50f8c8"/><stop offset="0.88923" stop-color="#50f8c8"/><stop offset="0.88923" stop-color="#f66fc0"/><stop offset="0.90253" stop-color="#f66fc0"/><stop offset="0.90253" stop-color="#e878f4"/><stop offset="0.92385" stop-color="#e878f4"/><stop offset="0.92385" stop-color="#b487fc"/><stop offset="0.93205" stop-color="#b487fc"/><stop offset="0.93205" stop-color="#5ef2e6"/><stop offset="0.93860" stop-color="#5ef2e6"/><stop offset="0.93860" stop-color="#f8d070"/><stop offset="0.94535" stop-color="#f8d070"/><stop offset="0.94535" stop-color="#f66fc0"/><stop offset="0.95063" stop-color="#f66fc0"/><stop offset="0.95063" stop-color="#8484f4"/><stop offset="0.95864" stop-color="#8484f4"/><stop offset="0.95864" stop-color="#c0f878"/><stop offset="0.97067" stop-color="#c0f878"/><stop offset="0.97067" stop-color="#ff8094"/><stop offset="0.99326" stop-color="#ff8094"/><stop offset="0.99326" stop-color="#c0f878"/><stop offset="1.00000" stop-color="#c0f878"/></linearGradient><rect x="25.40" y="289.80" width="548.90" height="6.20" fill="url(#g16)"/><rect x="25.40" y="289.80" width="548.90" height="6.20" fill="#fff" fill-opacity="0.12"/><rect x="25.00" y="289.60" width="549.50" height="6.40" fill="url(#st2)" fill-opacity="0.22"/><rect x="330.40" y="280.00" width="14.30" height="16.00" fill="#a0a0a8" fill-opacity="0.34"/><rect x="336.30" y="280.70" width="3.70" height="7.70" fill="#3a5fe0"/></svg>
<span style="left:326.75px;top:121.00px;font-size:10.5px;line-height:11.73px;color:#8a8a8a;letter-spacing:0.236px;">By business unit</span>
<span style="left:427.50px;top:121.00px;font-size:10.5px;line-height:11.73px;color:#2b8fd0;letter-spacing:0.109px;">By user</span>
<span style="left:484.50px;top:121.00px;font-size:10.5px;line-height:11.73px;color:#8a8a8a;letter-spacing:0.298px;">By application</span>
<span style="left:574.50px;top:121.00px;font-size:10.5px;line-height:11.73px;color:#8a8a8a;letter-spacing:0.392px;">Trends</span>
<span style="left:322.00px;top:152.21px;font-size:12px;line-height:13.40px;color:#1a1a1a;letter-spacing:0.165px;font-weight:bold;transform:scaleX(0.945);transform-origin:0 0;">Potential savings by user</span>
<span style="left:353.00px;top:172.00px;font-size:10.5px;line-height:11.73px;color:#444;letter-spacing:0.247px;">Name</span>
<span style="left:511.75px;top:172.00px;font-size:10.5px;line-height:11.73px;color:#444;letter-spacing:0.358px;">Team</span>
<span style="left:617.00px;top:172.00px;font-size:10.5px;line-height:11.73px;color:#444;letter-spacing:0.543px;">Department</span>
<span style="left:722.50px;top:172.00px;font-size:10.5px;line-height:11.73px;color:#444;letter-spacing:0.223px;">Occurrences</span>
<span style="left:798.00px;top:172.00px;font-size:10.5px;line-height:11.73px;color:#444;letter-spacing:0.179px;">Potential Savings</span>
<span style="left:352.50px;top:196.50px;font-size:10.5px;line-height:11.73px;color:#333;letter-spacing:0.097px;">Chris Fields</span>
<span style="left:511.50px;top:196.50px;font-size:10.5px;line-height:11.73px;color:#333;letter-spacing:0.025px;">Escalations T2</span>
<span style="left:617.00px;top:196.50px;font-size:10.5px;line-height:11.73px;color:#333;letter-spacing:0.299px;">Customer Operati...</span>
<span style="left:722.70px;top:196.50px;font-size:10.5px;line-height:11.73px;color:#333;letter-spacing:-0.179px;">56</span>
<span style="left:803.30px;top:196.50px;font-size:10.5px;line-height:11.73px;color:#1d3a2c;letter-spacing:0.214px;">$813</span>
<span style="left:352.50px;top:388.60px;font-size:10.5px;line-height:11.73px;color:#333;letter-spacing:0.175px;">Justina Atchison</span>
<span style="left:511.50px;top:388.60px;font-size:10.5px;line-height:11.73px;color:#333;letter-spacing:0.122px;">Customer Care T4</span>
<span style="left:617.00px;top:388.60px;font-size:10.5px;line-height:11.73px;color:#333;letter-spacing:0.299px;">Customer Operati...</span>
<span style="left:722.70px;top:388.60px;font-size:10.5px;line-height:11.73px;color:#333;letter-spacing:-0.179px;">53</span>
<span style="left:803.30px;top:388.60px;font-size:10.5px;line-height:11.73px;color:#1d3a2c;letter-spacing:0.214px;">$748</span>
<span style="left:333.25px;top:228.00px;font-size:10.5px;line-height:11.73px;color:#333;letter-spacing:0.071px;">May 5, 2017</span>
<span style="left:333.00px;top:420.00px;font-size:10.5px;line-height:11.73px;color:#333;letter-spacing:0.107px;">May 16, 2017</span>
<span style="left:388.94px;top:311.00px;font-size:8.6px;line-height:9.61px;color:#9a9a9a;">04:55</span>
<span style="left:478.37px;top:311.00px;font-size:8.6px;line-height:9.61px;color:#9a9a9a;">05 PM</span>
<span style="left:571.14px;top:311.00px;font-size:8.6px;line-height:9.61px;color:#9a9a9a;">05:05</span>
<span style="left:662.24px;top:311.00px;font-size:8.6px;line-height:9.61px;color:#9a9a9a;">05:10</span>
<span style="left:753.34px;top:311.00px;font-size:8.6px;line-height:9.61px;color:#9a9a9a;">05:15</span>
<span style="left:844.44px;top:311.00px;font-size:8.6px;line-height:9.61px;color:#9a9a9a;">05:20</span>
<span style="left:324.31px;top:360.61px;font-size:8.6px;line-height:9.61px;color:#9a9a9a;">09 AM</span>
<span style="left:381.91px;top:360.61px;font-size:8.6px;line-height:9.61px;color:#9a9a9a;">10 AM</span>
<span style="left:439.83px;top:360.61px;font-size:8.6px;line-height:9.61px;color:#9a9a9a;">11 AM</span>
<span style="left:496.87px;top:360.61px;font-size:8.6px;line-height:9.61px;color:#9a9a9a;">12 PM</span>
<span style="left:554.47px;top:360.61px;font-size:8.6px;line-height:9.61px;color:#9a9a9a;">01 PM</span>
<span style="left:612.07px;top:360.61px;font-size:8.6px;line-height:9.61px;color:#9a9a9a;">02 PM</span>
<span style="left:669.67px;top:360.61px;font-size:8.6px;line-height:9.61px;color:#9a9a9a;">03 PM</span>
<span style="left:727.27px;top:360.61px;font-size:8.6px;line-height:9.61px;color:#9a9a9a;">04 PM</span>
<span style="left:784.87px;top:360.61px;font-size:8.6px;line-height:9.61px;color:#9a9a9a;">05 PM</span>
<span style="left:842.47px;top:360.61px;font-size:8.6px;line-height:9.61px;color:#9a9a9a;">06 PM</span>
<span style="left:346.74px;top:503.00px;font-size:8.6px;line-height:9.61px;color:#9a9a9a;">02:19</span>
<span style="left:383.24px;top:503.00px;font-size:8.6px;line-height:9.61px;color:#9a9a9a;">02:20</span>
<span style="left:419.74px;top:503.00px;font-size:8.6px;line-height:9.61px;color:#9a9a9a;">02:21</span>
<span style="left:456.24px;top:503.00px;font-size:8.6px;line-height:9.61px;color:#9a9a9a;">02:22</span>
<span style="left:492.74px;top:503.00px;font-size:8.6px;line-height:9.61px;color:#9a9a9a;">02:23</span>
<span style="left:529.24px;top:503.00px;font-size:8.6px;line-height:9.61px;color:#9a9a9a;">02:24</span>
<span style="left:565.74px;top:503.00px;font-size:8.6px;line-height:9.61px;color:#9a9a9a;">02:25</span>
<span style="left:602.24px;top:503.00px;font-size:8.6px;line-height:9.61px;color:#9a9a9a;">02:26</span>
<span style="left:638.74px;top:503.00px;font-size:8.6px;line-height:9.61px;color:#9a9a9a;">02:27</span>
<span style="left:675.24px;top:503.00px;font-size:8.6px;line-height:9.61px;color:#9a9a9a;">02:28</span>
<span style="left:711.74px;top:503.00px;font-size:8.6px;line-height:9.61px;color:#9a9a9a;">02:29</span>
<span style="left:748.24px;top:503.00px;font-size:8.6px;line-height:9.61px;color:#9a9a9a;">02:30</span>
<span style="left:784.74px;top:503.00px;font-size:8.6px;line-height:9.61px;color:#9a9a9a;">02:31</span>
<span style="left:821.24px;top:503.00px;font-size:8.6px;line-height:9.61px;color:#9a9a9a;">02:32</span>
<span style="left:857.74px;top:503.00px;font-size:8.6px;line-height:9.61px;color:#9a9a9a;">02:33</span>
</main>
<div class="s shadow">
<div style="left:88.00px;top:109.00px;width:846.00px;height:1.00px;background:#fff;"></div>
<div style="left:88.00px;top:109.00px;width:846.00px;height:1.00px;background:rgba(0,0,0,0.11);"></div>
<div style="left:88.00px;top:110.00px;width:846.00px;height:1.00px;background:rgba(0,0,0,0.24);"></div>
<div style="left:88.00px;top:111.00px;width:846.00px;height:1.00px;background:rgba(0,0,0,0.12);"></div>
<div style="left:88.00px;top:112.00px;width:846.00px;height:1.00px;background:rgba(0,0,0,0.05);"></div>
</div>
</body></html>
